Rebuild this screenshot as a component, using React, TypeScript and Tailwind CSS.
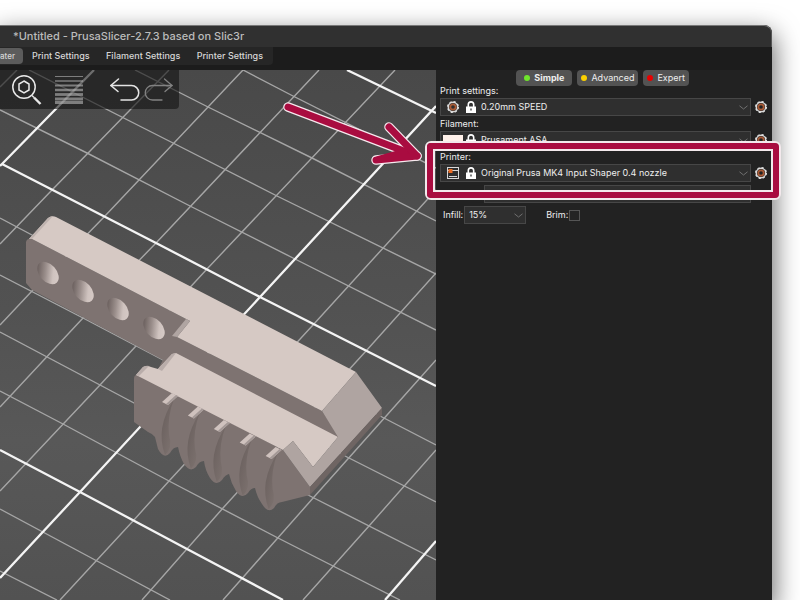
import { useState } from 'react';
import type { ReactNode } from 'react';

const TABS = ['Print Settings', 'Filament Settings', 'Printer Settings'];

const MODES = [
  { name: 'Simple', dot: 'bg-[#6fe52c]', style: 'px-2 font-bold' },
  { name: 'Advanced', dot: 'bg-[#fbd000]', style: 'px-1' },
  { name: 'Expert', dot: 'bg-[#e80000]', style: 'px-1' },
];

// print bed grid, as polyline points
const THIN_LINES = [
  '0,87 17,70',
  '0,244 52,190 169,70',
  '0,325 32,291 104,217 243,70',
  '0,407 83,318 156,243 319,70',
  '0,491 100,385 207,269 395,70',
  '60,600 133,521 169,481 313,325 436,190',
  '142,600 223,508 366,351 436,273',
  '223,600 314,497 420,378 436,360',
  '303,600 369,526 436,450',
  '243,70 293,96 436,168',
  '135,70 208,107 312,158 436,221',
  '29,70 173,143 277,196 436,274',
  '0,110 87,153 190,206 295,259 436,330',
  '0,218 32,235 382,417 436,445',
  '0,275 83,318 163,360 347,457 436,502',
  '0,332 100,385 310,496 436,560',
  '0,391 63,424 169,481 278,538 400,600',
  '0,509 97,561 170,600',
  '0,571 57,600',
];

const BOLD_LINES = [
  '0,166 2,164 94,70',
  '0,578 80,492 260,297 436,106',
  '385,600 436,541',
  '347,70 436,113',
  '2,164 156,243 260,297 436,386',
  '0,450 80,492 187,549 283,600',
];

const HOLES = [[48, 273], [83, 291], [118, 309], [154, 328]];

function Scene() {
  return (
    <svg
      className="absolute inset-0 h-full w-full"
      viewBox="0 70 436 530"
      preserveAspectRatio="xMinYMin slice"
      aria-hidden="true"
    >
      <defs>
        <linearGradient id="bed" x1="0" y1="0" x2="0" y2="1">
          <stop offset="0" stopColor="#494949" />
          <stop offset="0.45" stopColor="#525252" />
          <stop offset="0.7" stopColor="#585858" />
          <stop offset="1" stopColor="#525252" />
        </linearGradient>
        <linearGradient id="hole" x1="0" y1="0.8" x2="1" y2="0.2">
          <stop offset="0.1" stopColor="#6f6462" />
          <stop offset="0.4" stopColor="#9a8e8b" />
          <stop offset="0.7" stopColor="#cfc3bf" />
          <stop offset="1" stopColor="#d8ccc8" />
        </linearGradient>
        <linearGradient id="groove" x1="0" y1="0" x2="1" y2="1">
          <stop offset="0" stopColor="#675d5b" />
          <stop offset="1" stopColor="#807572" />
        </linearGradient>
      </defs>
      <rect y="70" width="436" height="530" fill="url(#bed)" />
      <g fill="none" stroke="#a6a6a6" strokeWidth="1.4">
        {THIN_LINES.map((points) => <polyline key={points} points={points} />)}
      </g>
      <g fill="none" stroke="#f4f4f4" strokeWidth="2.3">
        {BOLD_LINES.map((points) => <polyline key={points} points={points} />)}
      </g>

      {/* handle and body */}
      <path d="M26 242 Q27 238 32 239 L190 321 177 337 322 411 339 437 310 450 158 369 163 360 32 290 26 283Z" fill="#7e7371" />
      <path d="M29 239 L48 218 Q52 215 56 217 L356 372 322 411 177 337 190 321 32 239Z" fill="#d6c9c4" />
      <path d="M29 239 L48 218 Q51 216 53 216 L32 239Z" fill="#bfb3af" />
      <path d="M190 321 L177 337 172 336 186 319Z" fill="#b0a5a2" />
      {HOLES.map(([x, y]) => (
        <ellipse key={x} cx={x} cy={y} rx="13" ry="8.5" transform={`rotate(48 ${x} ${y})`} fill="url(#hole)" />
      ))}

      {/* comb side */}
      <path
        d="M134 379 Q134 374 139 375 L283 450 310 487 310 495 282 502 Q277 502 274 508 Q268 514 262 504 Q257 497 255 488 Q251 488 248 493 Q242 500 236 491 Q231 483 229 474 Q225 475 222 480 Q216 487 210 478 Q205 470 204 461 Q199 461 196 467 Q190 473 184 464 Q180 457 178 447 Q173 447 170 453 Q164 460 158 449 L155 437 Q153 434 148 432 L134 422Z"
        fill="#7e7371"
      />
      <path d="M176 353 L338 437 313 467 293 441 283 450 136 375 143 367 Q147 365 151 367 L158 369 172 354Z" fill="#d6c9c4" />
      <path d="M136 375 L143 367 Q147 365 149 366 L139 376Z" fill="#b9adaa" />
      <path d="M158 369 L172 354 176 353 162 371Z" fill="#b9adaa" />
      {[0, 1, 2, 3, 4].map((i) => (
        <g key={i} transform={`translate(${i * 25.9} ${i * 13.5})`}>
          <path d="M174 399 Q155 428 165 455 Q173 448 169 435 Q167 417 174 399Z" fill="url(#groove)" />
          <path d="M172 393 L178 396 168 405 162 402Z" fill="#cfc2be" />
          <path d="M178 396 L168 405 166 404 176 395Z" fill="#a39896" />
        </g>
      ))}

      {/* chamfered end */}
      <path d="M356 372 L382 408 310 487 283 450 293 441 313 467 338 437 322 411Z" fill="#afa4a1" />
      <path d="M382 408 L382 415 310 495 310 487Z" fill="#6f6563" />
    </svg>
  );
}

function ViewToolbar() {
  return (
    <div className="absolute top-0 left-0 flex h-[39px] w-[179px] items-center rounded-br bg-[#121212]/60 pl-[10px]">
      <button type="button" aria-label="Zoom to fit" className="mr-3 h-8 w-8">
        <svg viewBox="0 0 32 32" fill="none" stroke="#e8e8e8" strokeWidth="1.5">
          <circle cx="14" cy="13" r="11.2" />
          <path d="M14 7 L19 10 V16 L14 19 L9 16 V10Z" />
          <path d="M22 21.5 L24 23.5" />
          <path d="M24 23.5 L30.5 30" strokeWidth="2.4" />
        </svg>
      </button>
      <button type="button" aria-label="Variable layer height" className="mr-6 h-8 w-8 opacity-60">
        <svg viewBox="0 0 32 32" fill="none" stroke="#b8b8b8">
          <path d="M1 2.5H29" strokeWidth="1" />
          <path d="M1 7H29" strokeWidth="1.5" />
          <path d="M1 11.5H29" strokeWidth="2" />
          <path d="M1 16H29" strokeWidth="2.5" />
          <path d="M1 20.5H29" strokeWidth="2.8" />
          <path d="M1 25H29M1 28.5H29" strokeWidth="3.2" />
        </svg>
      </button>
      <button type="button" aria-label="Undo" className="h-8 w-8">
        <svg viewBox="0 0 32 32" fill="none" stroke="#e4e4e4" strokeWidth="1.5" strokeLinecap="round">
          <path d="M8.5 5 L1 11.5 L8 17.5" />
          <path d="M1 11.5 H21.5 A7 7 0 0 1 21.5 26 H11" />
        </svg>
      </button>
      <button type="button" aria-label="Redo" className="h-8 w-8">
        <svg viewBox="0 0 32 32" fill="none" stroke="#828282" strokeWidth="1.3" strokeLinecap="round">
          <path d="M22.5 5 L30 11.5 L23 17.5" />
          <path d="M30 11.5 H10.5 A7 7 0 0 0 10.5 26 H20" />
        </svg>
      </button>
    </div>
  );
}

function GearIcon() {
  return (
    <svg viewBox="0 0 12 12" className="h-3 w-3" fill="none" aria-hidden="true">
      <circle cx="6" cy="6" r="4.7" stroke="#d6d6d6" strokeWidth="1.5" />
      <circle cx="6" cy="6" r="5.4" stroke="#e6e6e6" strokeWidth="1.2" strokeDasharray="2.2 2.04" />
      <circle cx="6" cy="6" r="2.7" stroke="#a85a36" strokeWidth="1.8" />
    </svg>
  );
}

function PrinterIcon() {
  return (
    <svg viewBox="0 0 12 12" className="h-3 w-3" fill="none" stroke="#d8d8d8" aria-hidden="true">
      <rect x="0.5" y="0.5" width="11" height="11" />
      <path d="M1 3.5H11M2 9.5H10" />
      <rect x="1.5" y="2" width="4" height="4" fill="#ed6b21" stroke="none" />
    </svg>
  );
}

function LockIcon() {
  return (
    <svg viewBox="0 0 10 12" className="h-3 w-[10px] shrink-0" fill="none" aria-hidden="true">
      <path d="M2.3 6V3.6A2.7 2.7 0 0 1 7.7 3.6V6" stroke="#fff" strokeWidth="1.6" />
      <path d="M0 5.5H10V12H0Z" fill="#fff" />
      <path d="M5 7.4V9.6" stroke="#333" strokeWidth="1.3" />
    </svg>
  );
}

function Chevron() {
  return (
    <svg viewBox="0 0 9 5" className="pointer-events-none mr-[2px] h-[5px] w-[9px] shrink-0" fill="none" stroke="#707070" aria-hidden="true">
      <path d="M0.5 0.8 L4.5 4 L8.5 0.8" />
    </svg>
  );
}

type PresetProps = { id: string; label: string; value: string; icon: ReactNode };

function PresetRow({ id, label, value, icon }: PresetProps) {
  return (
    <div>
      <label htmlFor={id} className="block h-[15px] leading-[15px]">{label}</label>
      <div className="flex items-center gap-1">
        <div className="flex h-[18px] min-w-0 flex-1 items-center border border-[#474747] bg-[#2f2f2f] pl-[2px]">
          <span className="mr-[3px] flex w-5 shrink-0 justify-center">{icon}</span>
          <LockIcon />
          <select id={id} defaultValue={value} className="h-4 min-w-0 flex-1 appearance-none pl-[5px] outline-none">
            <option>{value}</option>
          </select>
          <Chevron />
        </div>
        <button type="button" aria-label={`Edit ${label}`} className="h-3 w-3 shrink-0"><GearIcon /></button>
      </div>
    </div>
  );
}

function Highlight() {
  return (
    <>
      <div className="pointer-events-none absolute -top-[8px] -right-[14px] -bottom-[18px] -left-[15px] rounded-md border-2 border-[#f3e9ec]">
        <div className="h-full rounded border-[6px] border-[#a90c40]">
          <div className="h-full border-2 border-[#f3e9ec]" />
        </div>
      </div>
      <svg viewBox="280 98 150 70" className="pointer-events-none absolute -top-[50px] -left-[160px] h-[70px] w-[150px]" fill="none" strokeLinecap="round" strokeLinejoin="round" aria-hidden="true">
        <g stroke="#f6e9ee" strokeWidth="9.5">
          <path d="M288 106 L417 155" />
          <path d="M389 126 L417 155 L376 159" />
        </g>
        <g stroke="#a90c40" strokeWidth="7">
          <path d="M288 106 L417 155" />
          <path d="M389 126 L417 155 L376 159 L404 151" />
        </g>
      </svg>
    </>
  );
}

function Sidebar() {
  const [brim, setBrim] = useState(false);

  return (
    <aside className="relative z-10 w-[336px] shrink-0 bg-[#222222] pr-[5px] pl-1 text-[9px] text-[#eeeeee]">
      <div className="flex h-3 justify-end gap-[5px] pr-[78px]">
        {MODES.map((mode) => (
          <button
            key={mode.name}
            type="button"
            className={`flex h-4 items-center gap-1 rounded bg-[#535353] ${mode.style}`}
          >
            <span className={`h-[6px] w-[6px] rounded-full ${mode.dot}`} />
            {mode.name}
          </button>
        ))}
      </div>

      <div className="pt-px">
        <PresetRow id="print" label="Print settings:" value="0.20mm SPEED" icon={<GearIcon />} />
        <PresetRow
          id="filament"
          label="Filament:"
          value="Prusament ASA"
          icon={<span className="h-[10px] w-5 bg-[#fff1ea]" />}
        />
        <div className="relative">
          <PresetRow id="printer" label="Printer:" value="Original Prusa MK4 Input Shaper 0.4 nozzle" icon={<PrinterIcon />} />
          <Highlight />
        </div>
      </div>

      <select
        aria-label="Supports"
        className="mt-[3px] mr-4 ml-11 block h-[18px] w-[267px] appearance-none border border-[#474747] bg-[#2f2f2f]"
      />

      <div className="mt-[3px] flex h-[18px] items-center pl-[3px]">
        <label htmlFor="infill">Infill:</label>
        <div className="ml-px flex h-[18px] w-[62px] items-center border border-[#474747] bg-[#2f2f2f]">
          <select id="infill" defaultValue="15%" className="min-w-0 flex-1 appearance-none pl-1 outline-none">
            <option>15%</option>
          </select>
          <Chevron />
        </div>
        <label htmlFor="brim" className="ml-5">Brim:</label>
        <input
          id="brim"
          type="checkbox"
          checked={brim}
          onChange={(e) => setBrim(e.target.checked)}
          className="ml-px h-[11px] w-[11px] appearance-none border border-[#555555] bg-[#242424] checked:bg-[#8a8a8a]"
        />
      </div>
    </aside>
  );
}

export default function App() {
  return (
    <div className="h-screen overflow-hidden bg-white pt-[25px] pr-7 font-['Inter','Liberation_Sans',sans-serif]">
      <div className="flex h-full flex-col rounded-tr-lg bg-[#222222] shadow-[0_10px_26px_2px_rgba(0,0,0,0.6)]">
        <header className="h-[22px] shrink-0 rounded-tr-lg border-t border-r border-t-[#777777] border-r-[#555555] bg-[#303030] pl-[13px]">
          <h1 className="text-[11px] leading-[21px] font-medium whitespace-nowrap text-[#bcbcbc]">
            *Untitled - PrusaSlicer-2.7.3 based on Slic3r
          </h1>
        </header>
        <nav className="h-[23px] shrink-0 bg-[#1c1c1c] text-[9px] font-medium text-[#d6d6d6]">
          <div className="flex h-[18px] w-[273px] items-center rounded-br bg-[#262626]">
            <button type="button" aria-label="Plater" className="h-4 w-[23px] shrink-0 rounded-r bg-[#5c5c5c] pr-2 text-right text-[8px]">
              ater
            </button>
            <div className="flex flex-1 justify-between pr-[10px] pl-[9px]">
              {TABS.map((tab) => (
                <button key={tab} type="button" className="whitespace-nowrap">{tab}</button>
              ))}
            </div>
          </div>
        </nav>
        <div className="flex min-h-0 flex-1">
          <main className="relative min-w-0 flex-1 overflow-hidden">
            <Scene />
            <ViewToolbar />
          </main>
          <Sidebar />
        </div>
      </div>
    </div>
  );
}
